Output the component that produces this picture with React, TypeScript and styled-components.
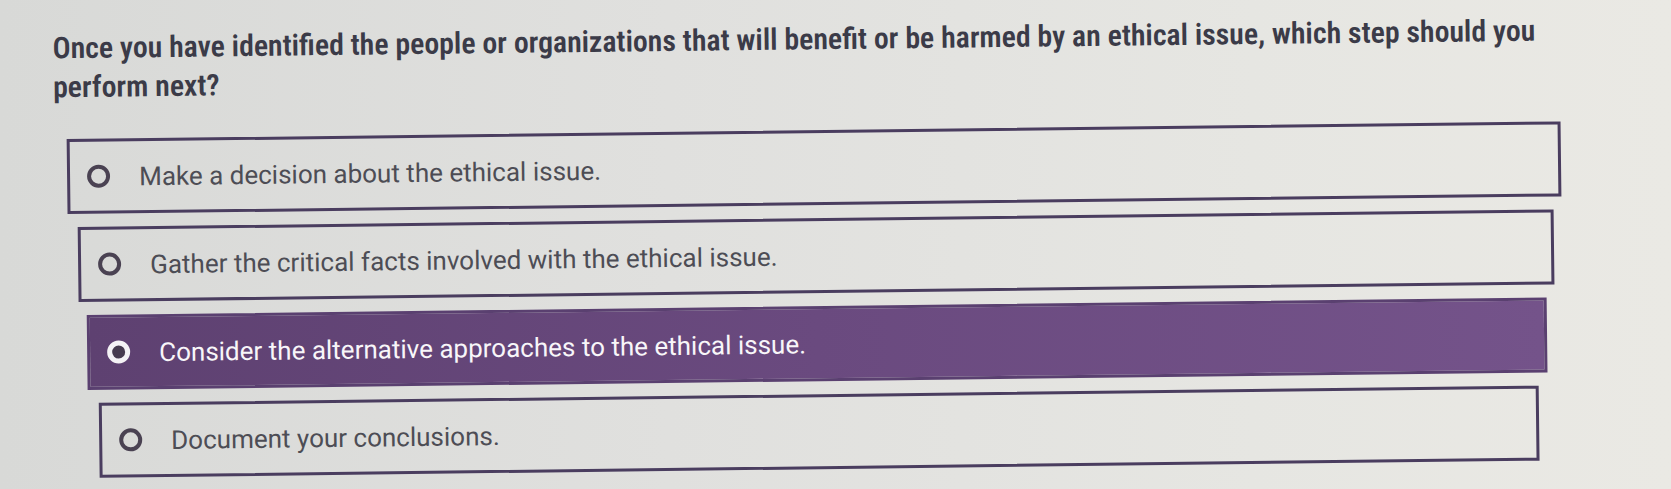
import React from "react";
import styled, { createGlobalStyle } from "styled-components";

const GlobalStyle = createGlobalStyle`
  html, body {
    margin: 0;
    padding: 0;
  }
  body {
    width: 1671px;
    height: 489px;
    overflow: hidden;
    background: linear-gradient(90deg, #d8d9d7 0%, #e0e0de 40%, #e6e6e2 75%, #eae9e4 100%);
    font-family: Roboto, "Liberation Sans", Arial, sans-serif;
  }
`;

const Page = styled.main`
  display: flex;
  flex-direction: column;
  padding: 19px 0 0 0;
  transform: rotate(-0.68deg);
  transform-origin: 835px 250px;
`;

const Question = styled.h1`
  margin: 0 0 33px 55px;
  width: 1530px;
  font-family: "Roboto Condensed", "Liberation Sans Narrow", "DejaVu Sans Condensed", sans-serif;
  font-weight: 600;
  font-size: 29.8px;
  line-height: 39px;
  color: #3b3b48;
`;

const Options = styled.div`
  display: flex;
  flex-direction: column;
  gap: 13px;
`;

const Option = styled.label<{ $left: number; $right: number; $selected?: boolean }>`
  display: flex;
  align-items: center;
  box-sizing: border-box;
  height: 75px;
  margin-left: ${(p) => p.$left}px;
  margin-right: ${(p) => p.$right}px;
  padding-left: 17px;
  border: 3px solid ${(p) => (p.$selected ? "#5a4070" : "#4a3d5f")};
  background: ${(p) =>
    p.$selected ? "linear-gradient(90deg, #5e4171 0%, #6a4a7f 50%, #74538a 100%)" : "transparent"};
  cursor: pointer;
`;

const Radio = styled.span<{ $selected?: boolean }>`
  flex: none;
  box-sizing: border-box;
  width: 23px;
  height: 23px;
  border-radius: 50%;
  border: ${(p) => (p.$selected ? "5px solid #f4f2f5" : "4px solid #4a4252")};
  background: ${(p) => (p.$selected ? "#463b4f" : "transparent")};
`;

const OptionText = styled.span<{ $selected?: boolean }>`
  margin-left: 29px;
  font-family: Roboto, "Liberation Sans", sans-serif;
  font-size: 26px;
  font-weight: 400;
  color: ${(p) => (p.$selected ? "#f8f6f9" : "#4d4d55")};
`;

const choices = [
  { text: "Make a decision about the ethical issue.", left: 68, right: 109 },
  { text: "Gather the critical facts involved with the ethical issue.", left: 78, right: 117 },
  { text: "Consider the alternative approaches to the ethical issue.", left: 86, right: 125, selected: true },
  { text: "Document your conclusions.", left: 97, right: 134 },
];

export default function App() {
  return (
    <>
      <GlobalStyle />
      <Page>
        <Question>
          Once you have identified the people or organizations that will benefit or be harmed by an ethical issue, which
          step should you perform next?
        </Question>
        <Options>
          {choices.map((c) => (
            <Option key={c.text} $left={c.left} $right={c.right} $selected={c.selected}>
              <Radio $selected={c.selected} />
              <OptionText $selected={c.selected}>{c.text}</OptionText>
            </Option>
          ))}
        </Options>
      </Page>
    </>
  );
}
